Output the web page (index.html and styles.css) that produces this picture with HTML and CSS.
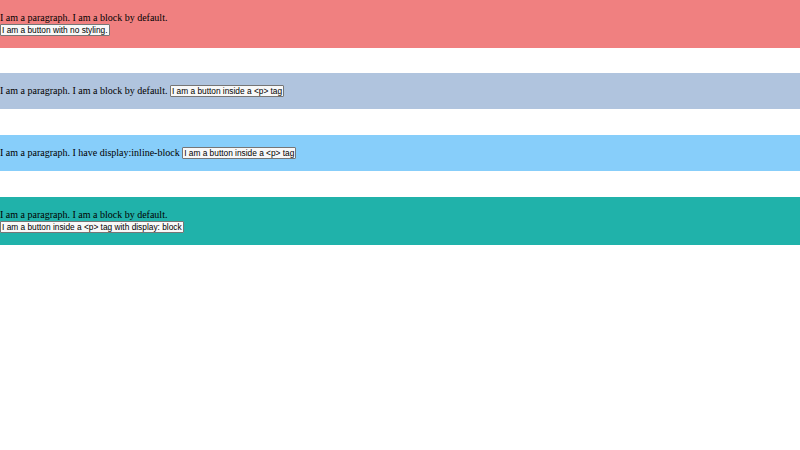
FILE: index.html
```html
<!DOCTYPE html>
<html>
<head>
<meta charset="utf-8">
<link rel="stylesheet" href="styles.css">
</head>
<body>
  <div class="box box-red">
    <p class="para">I am a paragraph. I am a block by default.</p>
    <button class="btn">I am a button with no styling.</button>
  </div>
  <div class="box box-steel">
    <p class="para">I am a paragraph. I am a block by default. <button class="btn">I am a button inside a &lt;p&gt; tag</button></p>
  </div>
  <div class="box box-sky">
    <p class="para para-inline">I am a paragraph. I have display:inline-block</p> <button class="btn">I am a button inside a &lt;p&gt; tag</button>
  </div>
  <div class="box box-green">
    <p class="para">I am a paragraph. I am a block by default. <button class="btn btn-block">I am a button inside a &lt;p&gt; tag with display: block</button></p>
  </div>
</body>
</html>
```
FILE: styles.css
```css
html, body {
  margin: 0;
  padding: 0;
  background: #ffffff;
}
body {
  display: flex;
  flex-direction: column;
  gap: 26px;
  font-family: "Liberation Serif", "Times New Roman", serif;
  font-size: 10px;
  color: #000;
}
.box {
  padding: 12px 0;
  line-height: 12px;
}
.box-red {
  background: #f08080;
  margin-bottom: -1px;
}
.box-steel {
  background: #b0c4de;
}
.box-sky {
  background: #87cefa;
}
.box-green {
  background: #20b2aa;
}
.para {
  margin: 0;
}
.para-inline {
  display: inline-block;
}
.btn {
  font-family: "Liberation Sans", Arial, sans-serif;
  font-size: 8.33px;
  line-height: 10px;
  padding: 0 1px;
  margin: 0;
  border: 1px solid #767676;
  border-radius: 1px;
  background: #f8f8f8;
  color: #000;
  vertical-align: baseline;
}
.btn-block {
  display: block;
}
```
